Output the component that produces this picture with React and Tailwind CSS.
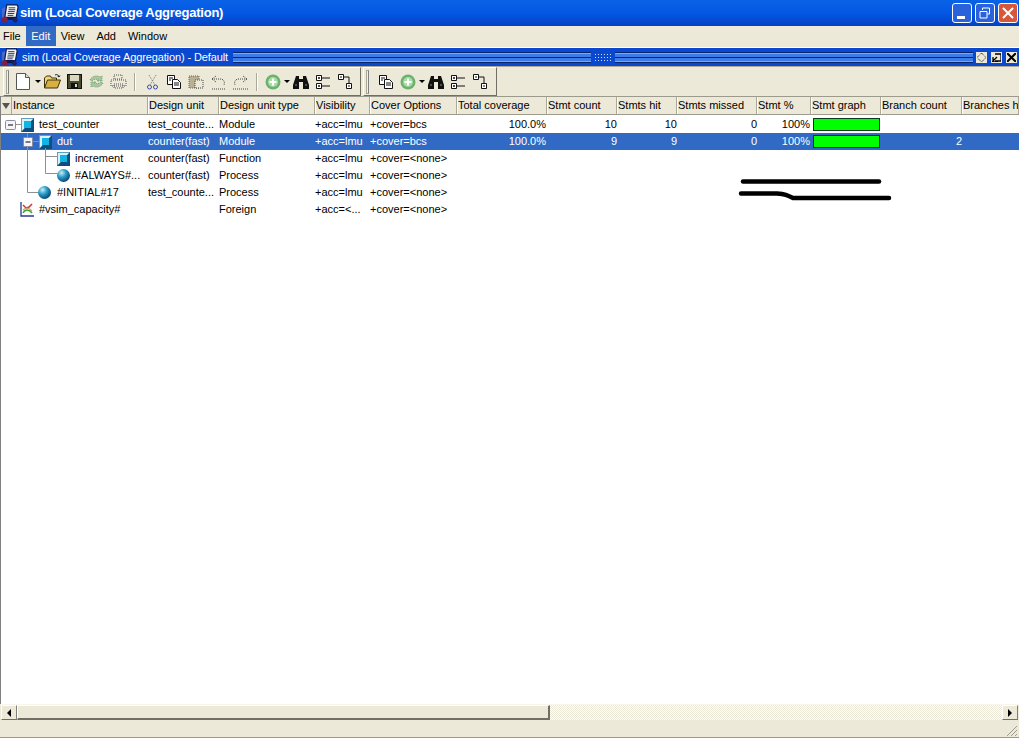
import React from 'react';

const gridCols = 'grid grid-cols-[147px_71px_96px_55px_87px_90px_70px_60px_80px_54px_70px_81px_57px]';

const headers = ['Design unit', 'Design unit type', 'Visibility', 'Cover Options', 'Total coverage', 'Stmt count', 'Stmts hit', 'Stmts missed', 'Stmt %', 'Stmt graph', 'Branch count', 'Branches hit'];

const rows = [
    { name: 'test_counter', indent: 'pl-[20px]', gap: 'mr-[5px]', icon: 'cube', unit: 'test_counte...', type: 'Module', vis: '+acc=lmu', cover: '+cover=bcs', total: '100.0%', count: '10', hit: '10', missed: '0', pct: '100%', graph: true },
    { name: 'dut', indent: 'pl-[38px]', gap: 'mr-[5px]', icon: 'cube', unit: 'counter(fast)', type: 'Module', vis: '+acc=lmu', cover: '+cover=bcs', total: '100.0%', count: '9', hit: '9', missed: '0', pct: '100%', graph: true, branch: '2', selected: true },
    { name: 'increment', indent: 'pl-[56px]', gap: 'mr-[5px]', icon: 'cube', unit: 'counter(fast)', type: 'Function', vis: '+acc=lmu', cover: '+cover=<none>' },
    { name: '#ALWAYS#...', indent: 'pl-[56px]', gap: 'mr-[5px]', icon: 'sphere', unit: 'counter(fast)', type: 'Process', vis: '+acc=lmu', cover: '+cover=<none>' },
    { name: '#INITIAL#17', indent: 'pl-[37px]', gap: 'mr-[6px]', icon: 'sphere', unit: 'test_counte...', type: 'Process', vis: '+acc=lmu', cover: '+cover=<none>' },
    { name: '#vsim_capacity#', indent: 'pl-[19px]', gap: 'mr-[5px]', icon: 'chart', unit: '', type: 'Foreign', vis: '+acc=<...', cover: '+cover=<none>' },
];

function AppIcon({ size = 20 }) {
    return (
        <svg width={size} height={size} viewBox="0 0 20 20" className="shrink-0">
            <path d="M1 5l4-2-1 10-3 2z" fill="#4a68c8" />
            <path d="M6 1h11l1 2-2 11H4z" fill="#f4f4ee" stroke="#101a50" strokeWidth="1.300" />
            <path d="M8 4h7M8 6h7M7.500 8h7M7 10h7M7 12h6" stroke="#2a2f60" />
            <path d="M3 15.500h12" stroke="#101a50" strokeWidth="2.500" />
            <circle cx="4" cy="16.500" r="3" fill="#8a1c3c" />
            <circle cx="15" cy="17" r="2.600" fill="#1c2266" />
        </svg>
    );
}

function TreeIcon({ kind }) {
    if (kind === 'cube') {
        return (
            <svg width="13" height="14" viewBox="0 0 13 14" className="shrink-0 block">
                <rect x="0.500" y="0.500" width="12" height="13" fill="#d8f2f8" stroke="#5f9fc0" />
                <path d="M13 0v14H0z" fill="#0a4f80" />
                <rect x="3" y="3" width="7" height="7" fill="#12b4e6" />
            </svg>
        );
    }
    if (kind === 'sphere') {
        return (
            <svg width="13" height="13" viewBox="0 0 13 13" className="shrink-0 block">
                <defs>
                    <radialGradient id="ball" cx="35%" cy="30%" r="75%">
                        <stop offset="0" stopColor="#c8f0f8" />
                        <stop offset="0.45" stopColor="#2a9cc8" />
                        <stop offset="1" stopColor="#08406c" />
                    </radialGradient>
                </defs>
                <circle cx="6.500" cy="6.500" r="6.500" fill="url(#ball)" />
            </svg>
        );
    }
    return (
        <svg width="14" height="15" viewBox="0 0 14 15" className="shrink-0 block">
            <path d="M1 0v14h13" fill="none" stroke="#2a3a90" strokeWidth="1.300" />
            <path d="M3 11c2-4 6-4 9 0" fill="none" stroke="#38a838" strokeWidth="1.500" />
            <path d="M3 3l3 3 3-1 3-3" fill="none" stroke="#c83838" strokeWidth="1.500" />
            <path d="M3 8c2-2 3-2 4-2s3 1 5 3" fill="none" stroke="#d89868" strokeWidth="1.200" />
        </svg>
    );
}

function CircleAdd() {
    return (
        <svg width="16" height="16" viewBox="0 0 16 16">
            <circle cx="8" cy="8" r="7.500" fill="#6cb26c" />
            <circle cx="8" cy="8" r="5" fill="#a8dca8" />
            <path d="M8 4.500v7M4.500 8h7" stroke="#fff" strokeWidth="2" />
        </svg>
    );
}

function ToolIcon({ kind }) {
    switch (kind) {
        case 'new':
            return (
                <svg width="14" height="17" viewBox="0 0 14 17">
                    <path d="M.5.500h9l4 4v12H.5z" fill="#fff" stroke="#555" />
                    <path d="M9.500.500v4h4" fill="#ddd" stroke="#555" />
                </svg>
            );
        case 'open':
            return (
                <svg width="17" height="15" viewBox="0 0 17 15">
                    <path d="M.5 14V4l2-2h4l1 2h5v2" fill="#f4d878" stroke="#3c3010" />
                    <path d="M.5 14l3-8h13l-3 8z" fill="#d8b040" stroke="#3c3010" />
                    <path d="M11 1c2-1 4 0 4 2M15 3l-1.500-1M15 3l1-1.500" fill="none" stroke="#222" />
                </svg>
            );
        case 'save':
            return (
                <svg width="15" height="15" viewBox="0 0 15 15">
                    <rect x=".5" y=".5" width="14" height="14" fill="#4a4a30" stroke="#111" />
                    <rect x="3" y="1" width="9" height="6" fill="#d8d8c0" />
                    <rect x="4" y="9" width="7" height="5" fill="#111" />
                    <rect x="8" y="10" width="2" height="3" fill="#d8d8c0" />
                </svg>
            );
        case 'sync':
            return (
                <svg width="17" height="15" viewBox="0 0 17 15">
                    <path d="M2 6c2-4 7-5 10-3l2-1v5h-5l2-1c-2-1-5-1-7 1zM15 9c-2 4-7 5-10 3l-2 1V8h5l-2 1c2 1 5 1 7-1z" fill="#a8c8a0" stroke="#6a9a6a" strokeDasharray="1 1" />
                </svg>
            );
        case 'print':
            return (
                <svg width="17" height="15" viewBox="0 0 17 15">
                    <path d="M4 1h8v4H4zM1 6h15v6H1zM4 10h9v4H4z" fill="#ece9d8" stroke="#555" strokeDasharray="1 1" />
                </svg>
            );
        case 'cut':
            return (
                <svg width="11" height="16" viewBox="0 0 11 16">
                    <path d="M2 1l6 10M9 1L3 11" stroke="#777" strokeDasharray="1 1" />
                    <circle cx="2.500" cy="13" r="2" fill="none" stroke="#3a4ab0" />
                    <circle cx="8.500" cy="13" r="2" fill="none" stroke="#3a4ab0" />
                </svg>
            );
        case 'copy':
            return (
                <svg width="15" height="14" viewBox="0 0 15 14">
                    <path d="M.5.500h7v9h-7z" fill="#fff" stroke="#111" />
                    <path d="M5.500 4.500h5l3 3v6h-8z" fill="#fff" stroke="#111" />
                    <path d="M2 3h4M2 5h2M7 8h5M7 10h5" stroke="#111" />
                </svg>
            );
        case 'paste':
            return (
                <svg width="16" height="15" viewBox="0 0 16 15">
                    <path d="M1 2h10v12H1z" fill="#b8b090" stroke="#666" strokeDasharray="1 1" />
                    <path d="M7 6h8v8H7z" fill="#ece9d8" stroke="#444" strokeDasharray="1 1" />
                </svg>
            );
        case 'undo':
            return (
                <svg width="15" height="16" viewBox="0 0 15 16">
                    <path d="M1 5l4-3M1 5l4 3M1 5h8c4 0 5 3 4 6M1 15h14" fill="none" stroke="#444" strokeDasharray="1 1" />
                </svg>
            );
        case 'redo':
            return (
                <svg width="15" height="16" viewBox="0 0 15 16">
                    <path d="M14 5l-4-3M14 5l-4 3M14 5H6C2 5 1 8 2 11M0 15h15" fill="none" stroke="#444" strokeDasharray="1 1" />
                </svg>
            );
        case 'find':
            return (
                <svg width="16" height="14" viewBox="0 0 16 14">
                    <path d="M3 1h3v3h4V1h3l3 9v4h-6V7H6v7H0v-4z" fill="#111" />
                    <path d="M2 10h2M12 10h2" stroke="#888" />
                </svg>
            );
        case 'expand':
            return (
                <svg width="15" height="15" viewBox="0 0 15 15">
                    <path d="M.5 1.500h5v5h-5zM.5 9.500h5v5h-5z" fill="#fff" stroke="#111" />
                    <path d="M2 4h2M3 3v2M2 12h2M3 11v2M6 4h8M6 12h8" stroke="#111" />
                </svg>
            );
        default:
            return (
                <svg width="15" height="16" viewBox="0 0 15 16">
                    <path d="M.5.500h5v5h-5zM8.500 9.500h5v5h-5z" fill="#fff" stroke="#111" />
                    <path d="M2 3h2M10 12h2M6 3h5v6" fill="none" stroke="#111" />
                </svg>
            );
    }
}

function Tool({ kind }) {
    return (
        <div className="w-[22px] h-[22px] flex items-center justify-center">
            {kind === 'add' ? <CircleAdd /> : <ToolIcon kind={kind} />}
        </div>
    );
}

function DropArrow({ width = 'w-[6px]' }) {
    return <div className={`${width} h-[22px] flex items-center justify-center`}><div className="border-x-[3px] border-t-[3px] border-x-transparent border-t-black" /></div>;
}

function Sep({ right = 'mr-[5px]' }) {
    return <div className={`w-px h-[18px] ml-[5px] ${right} bg-[#aca899] border-r border-white box-content`} />;
}

function Grip() {
    return <div className="w-[3px] h-[24px] ml-[2px] mr-[3px] border border-[#aca899] border-r-[#808080] bg-[#f4f2e8]" />;
}

function Stripes() {
    return (
        <div className="flex-1 h-[11px] flex flex-col justify-between bg-[#3c7ce8] border-y border-[#0a246a]">
            <div className="h-px bg-[#7aa8f0]" />
            <div className="h-px bg-[#0a246a]" />
            <div className="h-px bg-[#7aa8f0]" />
        </div>
    );
}

function WinButton({ children, red }) {
    return (
        <div className={`w-[20px] h-[20px] rounded-[3px] border border-white flex items-center justify-center ${red ? 'bg-[#d8573a]' : 'bg-[#2a62dc]'}`}>
            {children}
        </div>
    );
}

function MdiButton({ children }) {
    return <div className="w-[11px] h-[11px] bg-[#ece9d8] flex items-center justify-center">{children}</div>;
}

function ScrollButton({ dir }) {
    return (
        <div className="w-[16px] h-[15px] bg-[#ece9d8] border-t border-l border-white border-r border-r-[#808080] border-b border-b-[#716f64] flex items-center justify-center shrink-0">
            <div className={`border-y-[4px] border-y-transparent ${dir === 'left' ? 'border-r-[4px] border-r-black' : 'border-l-[4px] border-l-black'}`} />
        </div>
    );
}

export default function App() {
    return (
        <div className="w-[1019px] h-[738px] overflow-hidden flex flex-col bg-[#ece9d8] text-[11px] text-black font-['Liberation_Sans',sans-serif] relative">
            {/* Title bar */}
            <div className="h-[26px] shrink-0 flex items-center pl-[1px] pr-[1px] bg-gradient-to-b from-[#0a62e6] via-[#0458e4] to-[#0340c4]">
                <AppIcon size={19} />
                <span className="text-[13px] font-bold text-white tracking-[-0.25px]">sim (Local Coverage Aggregation)</span>
                <div className="ml-auto flex gap-[3px]">
                    <WinButton><div className="w-[8px] h-[3px] bg-white mt-[8px] mr-[3px]" /></WinButton>
                    <WinButton>
                        <svg width="12" height="12" viewBox="0 0 12 12"><path d="M3.500 3V1h7v6H8.500M1 4.500h7v6.500H1z" fill="none" stroke="#fff" /></svg>
                    </WinButton>
                    <WinButton red>
                        <svg width="12" height="12" viewBox="0 0 12 12"><path d="M1 1l10 10M11 1L1 11" stroke="#fff" strokeWidth="2" /></svg>
                    </WinButton>
                </div>
            </div>

            {/* Menu */}
            <div className="h-[20px] shrink-0 flex items-stretch">
                <div className="px-[3px] flex items-center">File</div>
                <div className="ml-[2px] w-[30px] justify-center bg-[#316ac5] text-white flex items-center">Edit</div>
                <div className="ml-[5px] flex items-center">View</div>
                <div className="ml-[12px] flex items-center">Add</div>
                <div className="ml-[12px] flex items-center">Window</div>
            </div>
            <div className="h-[2px] shrink-0 border-b border-white bg-[#ece9d8]" />

            {/* Inner window caption */}
            <div className="h-[18px] shrink-0 flex items-center gap-[3px] bg-[#0a48d0] pl-[1px] pr-[2px] text-white">
                <AppIcon size={18} />
                <span className="mr-[2px] whitespace-nowrap tracking-[-0.12px]">sim (Local Coverage Aggregation) - Default</span>
                <Stripes />
                <div className="w-[18px] h-[8px] bg-[radial-gradient(#cfe0ff_1px,transparent_1px)] bg-[length:3px_3px]" />
                <Stripes />
                <div className="flex gap-[4px]">
                    <MdiButton><svg width="9" height="9" viewBox="0 0 9 9"><path d="M4.500 0l4.500 4.500-4.500 4.500L0 4.500z" fill="none" stroke="#000" strokeDasharray="1 1" /></svg></MdiButton>
                    <MdiButton><svg width="9" height="9" viewBox="0 0 9 9"><path d="M3 1h6v7H3M0 9l5-5M1 4v5h5" fill="none" stroke="#000" strokeWidth="1.300" /></svg></MdiButton>
                    <MdiButton><svg width="9" height="9" viewBox="0 0 9 9"><path d="M0 0l9 9M9 0L0 9" stroke="#000" strokeWidth="2" /></svg></MdiButton>
                </div>
            </div>

            {/* Toolbars */}
            <div className="h-[30px] shrink-0 flex items-center gap-[2px] pl-[3px] border-t border-[#aca899]">
                <div className="w-[358px] h-[29px] flex items-center border border-t-white border-l-white border-r-[#716f64] border-b-[#716f64]">
                    <Grip />
                    <Tool kind="new" />
                    <DropArrow width="w-[7px]" />
                    <Tool kind="open" />
                    <Tool kind="save" />
                    <Tool kind="sync" />
                    <Tool kind="print" />
                    <Sep />
                    <Tool kind="cut" />
                    <Tool kind="copy" />
                    <Tool kind="paste" />
                    <Tool kind="undo" />
                    <Tool kind="redo" />
                    <Sep right="mr-[4px]" />
                    <Tool kind="add" />
                    <DropArrow />
                    <Tool kind="find" />
                    <Tool kind="expand" />
                    <Tool kind="collapse" />
                </div>
                <div className="w-[134px] h-[29px] flex items-center border border-t-white border-l-white border-r-[#716f64] border-b-[#716f64]">
                    <Grip />
                    <div className="w-[3px]" />
                    <Tool kind="copy" />
                    <Tool kind="add" />
                    <DropArrow />
                    <Tool kind="find" />
                    <Tool kind="expand" />
                    <Tool kind="collapse" />
                </div>
            </div>

            {/* Table */}
            <div className="flex-1 min-h-0 relative flex flex-col bg-white border-l border-[#808080] overflow-hidden">
                <div className={`${gridCols} h-[19px] shrink-0 bg-[#ece9d8] border-y border-[#9c9a8c] whitespace-nowrap`}>
                    <div className="flex items-center border-r border-[#aca899]">
                        <div className="w-[11px] h-full flex items-center justify-center border-r border-[#aca899] mr-[1px]">
                            <div className="border-x-[4px] border-t-[6px] border-x-transparent border-t-[#555]" />
                        </div>
                        Instance
                    </div>
                    {headers.map((h) => (
                        <div key={h} className="flex items-center border-r border-[#aca899] border-l border-l-white overflow-hidden">{h}</div>
                    ))}
                </div>
                <div className="h-[1px] shrink-0" />
                {rows.map((r) => (
                    <div key={r.name} className={`${gridCols} h-[17px] shrink-0 items-center whitespace-nowrap ${r.selected ? 'bg-[#316ac5] text-white' : ''}`}>
                        <div className={`flex items-center ${r.indent}`}>
                            <span className={r.gap}><TreeIcon kind={r.icon} /></span>
                            {r.name}
                        </div>
                        <div>{r.unit}</div>
                        <div>{r.type}</div>
                        <div>{r.vis}</div>
                        <div>{r.cover}</div>
                        <div className="text-right pr-[1px]">{r.total}</div>
                        <div className="text-right">{r.count}</div>
                        <div className="text-right">{r.hit}</div>
                        <div className="text-right">{r.missed}</div>
                        <div className="text-right pr-[1px]">{r.pct}</div>
                        <div className="pl-[2px]">
                            {r.graph && <div className="w-[67px] h-[13px] bg-[#00ff00] border border-[#0a3a1a]" />}
                        </div>
                        <div className="text-right">{r.branch}</div>
                        <div />
                    </div>
                ))}

                {/* Tree lines and expander boxes over the first column */}
                <svg width="40" height="90" viewBox="0 0 40 90" className="absolute left-[-1px] top-[20px]">
                    <path d="M15.500 8.500H21M32.500 25.500H39M27.500 17V76.500H38" fill="none" stroke="#909090" />
                    <rect x="5.500" y="4.500" width="10" height="9" rx="1" fill="#f4f4f8" stroke="#8a8aa0" />
                    <path d="M8 9h5" stroke="#000" />
                    <rect x="23.500" y="21.500" width="9" height="9" rx="1" fill="#f4f4f8" stroke="#8a8aa0" />
                    <path d="M25.500 26h5" stroke="#000" />
                </svg>
                <svg width="14" height="30" viewBox="0 0 14 30" className="absolute left-[44px] top-[52px]">
                    <path d="M.5 0V25.500H13M.5 8.500H13" fill="none" stroke="#909090" />
                </svg>
            </div>

            {/* Horizontal scrollbar */}
            <div className="h-[16px] shrink-0 flex items-center pl-px pr-px border-t border-[#f8f6ec]">
                <ScrollButton dir="left" />
                <div className="w-[533px] h-[15px] bg-[#ece9d8] border-t border-l border-white border-r-2 border-r-[#716f64] border-b-2 border-b-[#716f64]" />
                <div className="flex-1 h-[15px] bg-[repeating-conic-gradient(#ece9d8_0_25%,#ffffff_0_50%)] bg-[length:2px_2px]" />
                <ScrollButton dir="right" />
            </div>

            {/* Status bar */}
            <div className="h-[18px] shrink-0 flex justify-end items-end border-b border-[#9c9a8c]">
                <svg width="12" height="12" viewBox="0 0 12 12" className="mr-px">
                    <path d="M11 1L1 11M11 5l-6 6M11 9l-2 2" stroke="#9c9a8c" />
                </svg>
            </div>

            {/* Hand drawn marks over the table */}
            <svg width="160" height="30" viewBox="0 0 160 30" className="absolute left-[735px] top-[175px]">
                <path d="M8 6.500H144" stroke="#000" strokeWidth="4.500" strokeLinecap="round" fill="none" />
                <path d="M6 18.500H42C50 19 52 20 58 23H154" stroke="#000" strokeWidth="4.500" strokeLinecap="round" fill="none" />
            </svg>
        </div>
    );
}
